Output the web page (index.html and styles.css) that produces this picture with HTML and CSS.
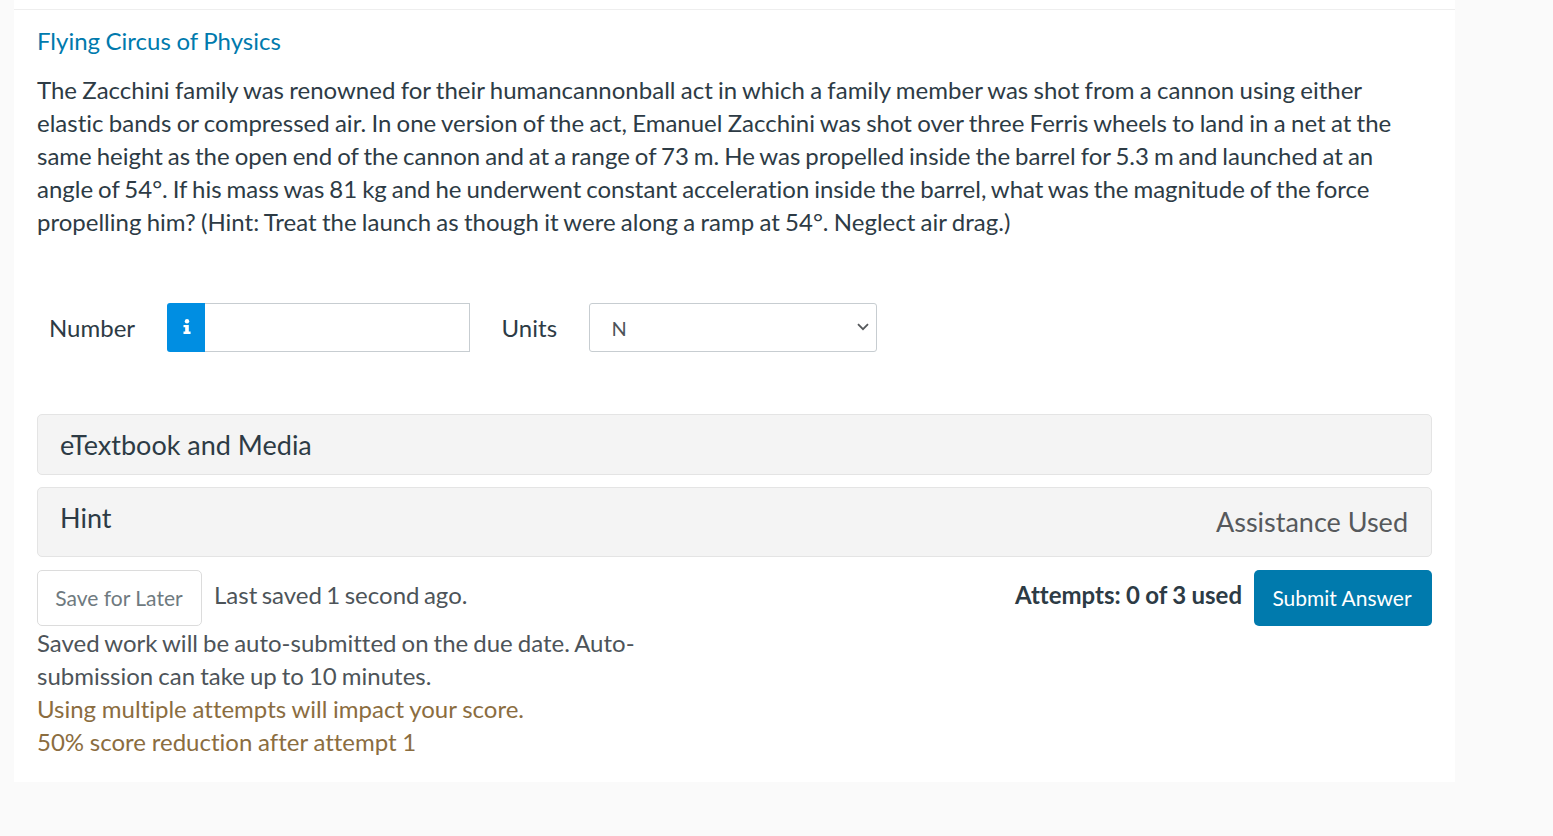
FILE: index.html
```html
<!DOCTYPE html>
<html lang="en">
<head>
  <meta charset="UTF-8" />
  <title>Flying Circus of Physics</title>
  <link rel="stylesheet" href="styles.css">
</head>
<body>
  <div class="card">
    <a class="source" href="#">Flying Circus of Physics</a>
    <p class="question">
      <span class="question-line">The Zacchini family was renowned for their humancannonball act in which a family member was shot from a cannon using either</span>
      <span class="question-line">elastic bands or compressed air. In one version of the act, Emanuel Zacchini was shot over three Ferris wheels to land in a net at the</span>
      <span class="question-line question-line-tight">same height as the open end of the cannon and at a range of 73 m. He was propelled inside the barrel for 5.3 m and launched at an</span>
      <span class="question-line question-line-tight">angle of 54°. If his mass was 81 kg and he underwent constant acceleration inside the barrel, what was the magnitude of the force</span>
      <span class="question-line">propelling him? (Hint: Treat the launch as though it were along a ramp at 54°. Neglect air drag.)</span>
    </p>

    <form class="answer-row">
      <label class="answer-label" for="number">Number</label>
      <div class="number-group">
        <span class="info-btn">
          <svg width="8" height="15" viewBox="0 0 8 15" aria-hidden="true">
            <circle cx="4" cy="2.2" r="2.2" fill="#fff"/>
            <path d="M0.5 6H5.8V12.6H7.6V15H0.5V12.6H2.2V8.3H0.5Z" fill="#fff"/>
          </svg>
        </span>
        <input id="number" class="number-input" type="text" />
      </div>
      <label class="answer-label units-label" for="units">Units</label>
      <div class="units-wrap">
        <select id="units" class="units-select">
          <option>N</option>
        </select>
        <svg class="units-arrow" width="12" height="8" viewBox="0 0 12 8" aria-hidden="true">
          <path d="M1 1.2L6 6.2L11 1.2" fill="none" stroke="#56595c" stroke-width="1.8"/>
        </svg>
      </div>
    </form>

    <div class="panel panel-media">
      <span class="panel-title">eTextbook and Media</span>
    </div>
    <div class="panel panel-hint">
      <span class="panel-title">Hint</span>
      <span class="panel-status">Assistance Used</span>
    </div>

    <div class="actions">
      <div class="actions-left">
        <div class="save-row">
          <button type="button" class="save-btn">Save for Later</button>
          <span class="saved-text">Last saved 1 second ago.</span>
        </div>
        <p class="note">Saved work will be auto-submitted on the due date. Auto-submission can take up to 10 minutes.</p>
        <p class="note note-warn">Using multiple attempts will impact your score.</p>
        <p class="note note-warn">50% score reduction after attempt 1</p>
      </div>
      <div class="actions-right">
        <span class="attempts">Attempts: 0 of 3 used</span>
        <button type="button" class="submit-btn">Submit Answer</button>
      </div>
    </div>
  </div>
</body>
</html>
```

FILE: styles.css
```css
/* General Styles */
html,
body {
  height: 100%;
}

body {
  margin: 0;
  background-color: #fafafa;
  font-family: 'Lato', 'Liberation Sans', sans-serif;
  font-variant-ligatures: none;
  color: #2d3b45;
  overflow: hidden;
}

.card {
  width: 1441px;
  height: 782px;
  box-sizing: border-box;
  margin-left: 14px;
  padding: 9px 23px 0;
  background-color: #fff;
}

.card::before {
  content: "";
  display: block;
  height: 1px;
  margin: 0 -23px;
  background-color: #eeeeee;
}

.source {
  display: block;
  margin-top: 14px;
  font-size: 24px;
  line-height: 33px;
  word-spacing: -0.6px;
  color: #007aad;
  text-decoration: none;
}

.question {
  margin: 16px 0 0;
  font-size: 24px;
  line-height: 33px;
  word-spacing: -0.85px;
}

.question-line {
  display: block;
  white-space: nowrap;
}

.question-line-tight {
  word-spacing: -1.2px;
}

/* Answer Row */
.answer-row {
  display: flex;
  align-items: center;
  height: 49px;
  margin-top: 65px;
  padding-left: 12px;
}

.answer-label {
  font-size: 24px;
}

.number-group {
  display: flex;
  height: 49px;
  margin-left: 32px;
}

.info-btn {
  display: flex;
  align-items: center;
  justify-content: center;
  width: 38px;
  padding: 0 0 3px 1px;
  box-sizing: border-box;
  background-color: #008ee2;
  border-radius: 3px 0 0 3px;
}

.number-input {
  width: 265px;
  height: 49px;
  box-sizing: border-box;
  border: 1px solid #c7cdd1;
  border-left: none;
  outline: none;
}

.units-label {
  margin-left: 31.5px;
}

.units-wrap {
  position: relative;
  margin-left: 31.5px;
}

.units-select {
  display: block;
  width: 288px;
  height: 49px;
  padding-left: 22px;
  appearance: none;
  background-color: #fff;
  border: 1px solid #c7cdd1;
  border-radius: 3px;
  font-family: inherit;
  font-size: 20px;
  color: #4d5459;
}

.units-arrow {
  position: absolute;
  top: 20px;
  right: 8px;
}

/* Panels */
.panel {
  display: flex;
  justify-content: space-between;
  box-sizing: border-box;
  width: 1395px;
  padding: 0 23px 0 22px;
  background-color: #f4f4f4;
  border: 1px solid #e4e4e4;
  border-radius: 5px;
}

.panel-media {
  height: 61px;
  margin-top: 62px;
  align-items: center;
}

.panel-hint {
  height: 70px;
  margin-top: 12px;
  padding-top: 12px;
}

.panel-title {
  font-size: 27px;
  line-height: 36px;
}

.panel-status {
  margin-top: 4px;
  font-size: 27px;
  line-height: 36px;
  color: #56595c;
}

/* Bottom Actions */
.actions {
  display: flex;
  justify-content: space-between;
  width: 1395px;
  margin-top: 13px;
}

.actions-left {
  width: 610px;
}

.save-row {
  display: flex;
  align-items: flex-start;
}

.save-btn {
  width: 165px;
  height: 56px;
  padding: 0 1px 2px 0;
  background-color: #fff;
  border: 1px solid #dcdcdc;
  border-radius: 5px;
  font-family: inherit;
  font-size: 21px;
  color: #6f7a80;
}

.saved-text {
  margin-left: 12px;
  font-size: 24px;
  line-height: 50px;
  word-spacing: -1.7px;
  color: #4d5459;
}

.note {
  margin: 0;
  font-size: 24px;
  line-height: 33px;
  word-spacing: -1.1px;
  color: #4d5459;
}

.note-warn {
  word-spacing: -0.4px;
  color: #8b6d3f;
}

.actions-right {
  display: flex;
  align-items: flex-start;
}

.attempts {
  font-size: 24px;
  font-weight: 700;
  line-height: 50px;
  word-spacing: -0.5px;
}

.submit-btn {
  width: 178px;
  height: 56px;
  margin-left: 12px;
  padding: 0 2px 2px 0;
  background-color: #007aad;
  border: none;
  border-radius: 5px;
  font-family: inherit;
  font-size: 21px;
  color: #fff;
}
```
